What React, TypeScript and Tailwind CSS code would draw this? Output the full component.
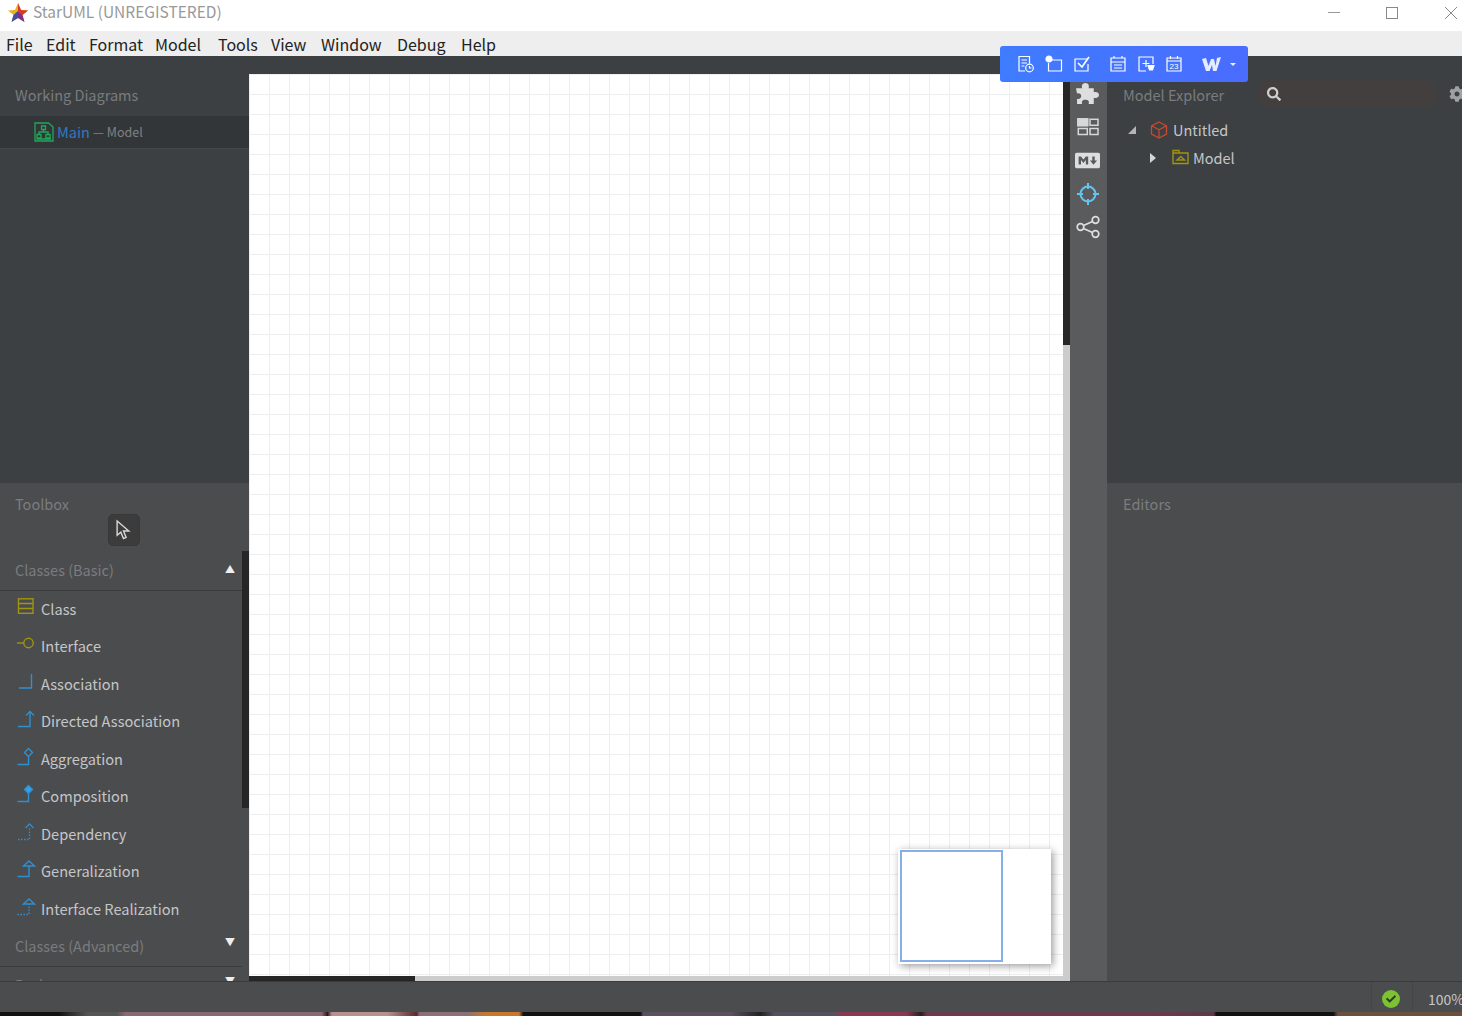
import React from "react";
import { FaCog, FaSearch, FaCheck, FaMarkdown } from "react-icons/fa";

const FONT = "font-['Noto_Sans_CJK_SC','Noto_Sans',sans-serif]";
const BLUE = "#2f8fd0";
const OLIVE = "#a09412";

const menus = [
  { label: "File", width: "w-[40px]" },
  { label: "Edit", width: "w-[43px]" },
  { label: "Format", width: "w-[66px]" },
  { label: "Model", width: "w-[63px]" },
  { label: "Tools", width: "w-[53px]" },
  { label: "View", width: "w-[50px]" },
  { label: "Window", width: "w-[76px]" },
  { label: "Debug", width: "w-[64px]" },
  { label: "Help", width: "w-[40px]" },
];

const tools: { label: string; icon: React.ReactNode }[] = [
  {
    label: "Class",
    icon: (
      <g fill="none" stroke={OLIVE} strokeWidth="1.4">
        <rect x="1.500" y="0.800" width="14.500" height="14.500" />
        <path d="M1.500 5.500H16M1.500 10.500H16" />
      </g>
    ),
  },
  {
    label: "Interface",
    icon: (
      <g fill="none" stroke={OLIVE} strokeWidth="1.4">
        <path d="M0 8H7" />
        <circle cx="11.500" cy="8" r="4.700" />
      </g>
    ),
  },
  {
    label: "Association",
    icon: <path d="M2 15H14.500V1" fill="none" stroke={BLUE} strokeWidth="1.4" />,
  },
  {
    label: "Directed Association",
    icon: (
      <g fill="none" stroke={BLUE} strokeWidth="1.4">
        <path d="M1 16.500H13V1.500" />
        <path d="M9 5.500L13 1.500L17 5.500" />
      </g>
    ),
  },
  {
    label: "Aggregation",
    icon: (
      <g fill="none" stroke={BLUE} strokeWidth="1.4">
        <path d="M0.500 16.500H11.500V8.500" />
        <path d="M11.500 0.500L15.500 4.500L11.500 8.500L7.500 4.500Z" />
      </g>
    ),
  },
  {
    label: "Composition",
    icon: (
      <g fill="none" stroke={BLUE} strokeWidth="1.4">
        <path d="M0.500 16.500H11.500V8.500" />
        <path d="M11.500 0.500L15.500 4.500L11.500 8.500L7.500 4.500Z" fill="#2ea3ea" />
      </g>
    ),
  },
  {
    label: "Dependency",
    icon: (
      <g fill="none" stroke={BLUE} strokeWidth="1.300">
        <path d="M1 16.500H12.500V5" strokeDasharray="1.500 1.500" />
        <path d="M8.500 5L12.500 1L16.500 5" />
      </g>
    ),
  },
  {
    label: "Generalization",
    icon: (
      <g fill="none" stroke={BLUE} strokeWidth="1.4">
        <path d="M0.500 16.500H12V6" />
        <path d="M6.500 6L12 1L17.500 6Z" />
      </g>
    ),
  },
  {
    label: "Interface Realization",
    icon: (
      <g fill="none" stroke={BLUE} strokeWidth="1.4">
        <path d="M0.500 16.500H12V6" strokeDasharray="1.500 1.500" />
        <path d="M6.500 6L12 1L17.500 6Z" />
      </g>
    ),
  },
];

const SectionHeader = ({ label, up }: { label: string; up?: boolean }) => (
  <div className="flex items-center justify-between h-[39px] pl-[15px] pr-[7px] pb-[2px] border-b border-[#3a3b3d] text-[14.500px] text-[#7a7c7e]">
    <span>{label}</span>
    <span className={up ? "text-[10px] text-[#eee] -mt-1" : "text-[10px] text-[#eee] -mt-2"}>{up ? "▲" : "▼"}</span>
  </div>
);

const ToolbarIcon = ({ children }: { children: React.ReactNode }) => (
  <svg width="18" height="18" viewBox="0 0 18 18" fill="none" stroke="#fff" strokeWidth="1.2">
    {children}
  </svg>
);

const RailItem = ({ children }: { children: React.ReactNode }) => (
  <div className="flex items-center justify-center h-[33.500px]">{children}</div>
);

export default function App() {
  return (
    <div className={`${FONT} relative flex flex-col w-[1462px] h-[1016px] overflow-hidden bg-[#3c4042]`}>
      {/* title bar */}
      <div className="flex items-center h-[31px] pb-[6px] bg-white shrink-0">
        <svg width="22" height="22" viewBox="0 0 22 22" className="ml-[7px] mr-[4px]">
          <path d="M11 1L14 8L21 8.500L15.500 13L17.500 20L11 16L4.500 20L6.500 13L1 8.500L8 8Z" fill="#e8b21e" />
          <path d="M11 1L14 8L21 8.500L15.500 13L11 9Z" fill="#d8392b" />
          <path d="M11 9L15.500 13L17.500 20L11 16Z" fill="#7d2f8e" />
          <path d="M11 9L11 16L4.500 20L6.500 13Z" fill="#3d4fa8" />
        </svg>
        <span className="text-[15.500px] text-[#999] -mt-[1px]">StarUML (UNREGISTERED)</span>
        <div className="ml-auto flex items-center">
          <div className="w-[12px] h-px bg-[#999] mr-[46px]" />
          <div className="w-[12px] h-[12px] border border-[#888] mr-[47px]" />
          <svg width="12" height="12" viewBox="0 0 12 12" className="mr-[5px]">
            <path d="M0 0L12 12M12 0L0 12" stroke="#888" strokeWidth="1" />
          </svg>
        </div>
      </div>

      {/* menu bar */}
      <div className="flex items-center h-[25px] pl-[6px] bg-[#eeeeee] text-[16px] text-[#222] shrink-0">
        {menus.map((m) => (
          <span key={m.label} className={m.width}>
            {m.label}
          </span>
        ))}
      </div>

      <div className="flex h-[925px] shrink-0">
        {/* left side */}
        <div className="flex flex-col w-[249px] shrink-0">
          <div className="h-[427px] bg-[#3c4042]">
            <div className="pt-[29px] pl-[15px] h-[60px] text-[14.500px] leading-[20px] text-[#7a7c7e]">Working Diagrams</div>
            <div className="flex items-center h-[33px] pl-[34px] bg-[#333638] border-b border-[#45484a]">
              <svg width="20" height="20" viewBox="0 0 20 20" fill="none" stroke="#1fa85a" strokeWidth="1.300" className="mr-[3px]">
                <path d="M1 1H14.500L19 5V19H1Z" />
                <path d="M7.500 4H11.500V7.500H7.500ZM3 12.500H7V16H3ZM12 12.500H16V16H12ZM9.500 7.500V10M5 12.500V10H14V12.500M2.500 17H17" />
              </svg>
              <span className="text-[14.500px] text-[#3079c0]">Main</span>
              <span className="ml-[3px] text-[12.500px] text-[#808284]">— Model</span>
            </div>
          </div>

          <div className="relative flex flex-col flex-1 min-h-0 bg-[#4b4c4e] overflow-hidden">
            <div className="pt-[11px] pl-[15px] text-[14.500px] leading-[20px] text-[#7a7c7e]">Toolbox</div>
            <div className="flex justify-center pr-[2px] h-[32px]">
              <div className="flex items-center justify-center w-[32px] h-[32px] rounded-[5px] bg-[#3c3c3d] border border-[#37383a]">
                <svg width="17" height="22" viewBox="0 0 16 20" fill="none" stroke="#d8d8d8" strokeWidth="1.300">
                  <path d="M2 1.500V15L5.500 12L8 18L10.500 17L8 11H13Z" />
                </svg>
              </div>
            </div>
            <div className="w-[242px] mt-[6px]">
              <SectionHeader label="Classes (Basic)" up />
              <div className="-mt-[1px]">
                {tools.map((t) => (
                  <div key={t.label} className="flex items-center h-[37.500px] pl-[16px] text-[14.600px] text-[#c5c6c7]">
                    <svg width="20" height="18" viewBox="0 0 18 18" className="mr-[5px] mt-[-4px] shrink-0 overflow-visible">
                      {t.icon}
                    </svg>
                    <span>{t.label}</span>
                  </div>
                ))}
              </div>
              <SectionHeader label="Classes (Advanced)" />
              <SectionHeader label="Packages" />
            </div>
            <div className="absolute left-[242px] top-[68px] w-[7px] h-[257px] bg-[#262626]" />
          </div>
        </div>

        {/* centre */}
        <div className="flex flex-col w-[821px] shrink-0">
          <div className="h-[18px] bg-[#3c4042]" />
          <div className="flex flex-1 min-h-0">
            <div className="flex flex-col flex-1">
              <div className="relative flex-1 bg-white bg-[linear-gradient(#eeeeee_1px,transparent_1px),linear-gradient(90deg,#eeeeee_1px,transparent_1px)] bg-[size:20px_20px] bg-[position:0px_0px]">
                <div className="absolute right-[12px] bottom-[12px] w-[153px] h-[115px] bg-white shadow-[2px_2px_8px_rgba(0,0,0,0.4)] pl-[2px] pt-[1px]">
                  <div className="w-[103px] h-[112px] border-2 border-[#86aee8]" />
                </div>
              </div>
              <div className="h-[5px] bg-[#cccccc]">
                <div className="w-[166px] h-[5px] bg-[#262626]" />
              </div>
            </div>
            <div className="w-[7px] bg-[#cccccc]">
              <div className="w-[7px] h-[271px] bg-[#262626]" />
            </div>
          </div>
        </div>

        {/* icon rail */}
        <div className="flex flex-col w-[37px] pt-[20.500px] pr-[2px] bg-[#5a5b5d] text-[#dedede] shrink-0">
          <RailItem>
            <svg width="23" height="21" viewBox="0 0 22 20" fill="#dedede">
              <path d="M0 5H6C5 3 6 0 9 0C12 0 13 3 12 5H17V9C19 8 22 9 22 11.500C22 14 19 15 17 14V20H12C13 18 12 16 9 16C6 16 5 18 6 20H1V15C3 16 5 14.500 5 12.500C5 10.500 3 9 1 10Z" />
            </svg>
          </RailItem>
          <RailItem>
            <svg width="22" height="18" viewBox="0 0 22 18" fill="none" stroke="#d8d8d8" strokeWidth="1.500">
              <rect x="0.800" y="0.800" width="10" height="7" fill="#d8d8d8" />
              <rect x="13" y="1.300" width="8" height="6" />
              <rect x="1.300" y="10.500" width="9" height="6" />
              <rect x="13" y="10.500" width="8" height="6" />
            </svg>
          </RailItem>
          <RailItem>
            <FaMarkdown size={25} />
          </RailItem>
          <RailItem>
            <svg width="24" height="24" viewBox="0 0 24 24" fill="none" stroke="#66c4ec" strokeWidth="2">
              <circle cx="12" cy="12" r="7.500" />
              <path d="M12 1V7M12 17V23M1 12H7M17 12H23" />
            </svg>
          </RailItem>
          <RailItem>
            <svg width="24" height="24" viewBox="0 0 24 24" fill="none" stroke="#dedede" strokeWidth="1.700">
              <circle cx="4.500" cy="12" r="3.300" />
              <circle cx="19.500" cy="5" r="3.300" />
              <circle cx="19.500" cy="19" r="3.300" />
              <path d="M7.500 10.500L16.500 6.500M7.500 13.500L16.500 17.500" />
            </svg>
          </RailItem>
        </div>

        {/* right side */}
        <div className="flex flex-col flex-1 min-w-0">
          <div className="h-[427px] bg-[#3c4042]">
            <div className="flex items-center pt-[24px] pl-[16px] h-[52px]">
              <span className="text-[14.500px] leading-[20px] mt-[2px] w-[135px] shrink-0 text-[#7a7c7e]">Model Explorer</span>
              <div className="flex items-center w-[179px] h-[28px] pl-[9px] rounded-[10px] bg-[#433f3f] shrink-0">
                <FaSearch size={14} className="text-[#d0d0d0]" />
              </div>
              <FaCog size={16} className="ml-[12px] text-[#a0a0a0] shrink-0" />
            </div>
            <div className="flex items-center h-[28px] mt-[8px] pl-[21px] text-[14.500px] text-[#c5c6c7]">
              <svg width="8" height="8" viewBox="0 0 8 8" className="mr-[14px]">
                <path d="M0 8H8V0Z" fill="#b5b5b5" />
              </svg>
              <svg width="18" height="18" viewBox="0 0 18 18" fill="none" stroke="#c8492f" strokeWidth="1.300" className="mr-[5px]">
                <path d="M9 1L16.500 4.800V13L9 17L1.500 13V4.800ZM1.500 4.800L9 8.800L16.500 4.800M9 8.800V17" />
              </svg>
              <span>Untitled</span>
            </div>
            <div className="flex items-center h-[28px] pl-[43px] text-[14.500px] text-[#c5c6c7]">
              <svg width="6" height="10" viewBox="0 0 6 10" className="mr-[16px]">
                <path d="M0 0L6 5L0 10Z" fill="#d5d5d5" />
              </svg>
              <svg width="17" height="16" viewBox="0 0 17 16" fill="none" stroke={OLIVE} strokeWidth="1.400" className="mr-[4px] -mt-[3px]">
                <path d="M1 14.500V1.500H7V4H16V14.500ZM1 4H7M5 11H12.500L8.800 7.500Z" />
              </svg>
              <span>Model</span>
            </div>
          </div>
          <div className="flex-1 bg-[#4b4c4e] pt-[11px] pl-[16px] text-[14.500px] leading-[20px] text-[#7a7c7e]">Editors</div>
        </div>
      </div>

      {/* status bar */}
      <div className="flex justify-end h-[31px] bg-[#4b4c4e] border-t border-[#3a3b3d] shrink-0">
        <div className="flex items-center justify-center w-[41px] pt-[3px] pr-[2px] border-l border-[#444547]">
          <div className="flex items-center justify-center w-[18px] h-[18px] rounded-full bg-[#7cc232]">
            <FaCheck size={10} className="text-[#333]" />
          </div>
        </div>
        <div className="w-[50px] pl-[15px] border-l border-[#444547] text-[14px] leading-[35px] text-[#c5c6c7] whitespace-nowrap overflow-hidden">100%</div>
      </div>

      {/* wallpaper peeking out below the window */}
      <div className="flex-1 bg-[linear-gradient(90deg,#111_0%,#111_4%,#555_6%,#555_8%,#8a6a70_8.600%,#8a6a70_22%,#2a1a1e_22.400%,#b89090_22.700%,#b89090_26.500%,#5a2a30_28.500%,#8a7078_28.700%,#8a7078_32%,#c8782a_33.200%,#c8782a_35.500%,#111_35.800%,#111_43.800%,#5a5060_44%,#5a5060_50%,#222_52%,#555060_53%,#555060_57%,#8a3a50_57.500%,#8a3a50_62%,#222_63%,#6a3a50_63.400%,#6a3a50_78.700%,#5a3a48_83%,#111_83.200%,#111_91.200%,#6a5040_91.500%,#6a5040_100%)]" />

      {/* floating extension toolbar */}
      <div className="absolute left-[1000px] top-[46px] flex items-center w-[248px] h-[36px] pl-[17px] rounded-[3px] bg-[linear-gradient(90deg,#3f7cff,#4a6cff)]">
        <div className="flex gap-[10px]">
          <ToolbarIcon>
            <path d="M12.500 8.500V1.500H2V16H8M4.500 5H10M4.500 8H10M4.500 11H7.500" />
            <circle cx="12.500" cy="13" r="3.800" />
            <path d="M12.500 11V13H14.500" />
          </ToolbarIcon>
          <ToolbarIcon>
            <path d="M6.500 5H16.500V16H3.500V8" />
            <circle cx="4" cy="4" r="3" fill="#fff" />
          </ToolbarIcon>
          <ToolbarIcon>
            <path d="M14 4H2V16H15V9" />
            <path d="M5 8L9 12L16 2" strokeWidth="1.700" />
          </ToolbarIcon>
        </div>
        <div className="flex gap-[10px] ml-[18px]">
          <ToolbarIcon>
            <path d="M2 3H16V16H2ZM5 1V3M13 1V3M2 7H16M5 10H13M5 13H13" />
          </ToolbarIcon>
          <ToolbarIcon>
            <path d="M16 9V2H2V16H9M9 5V12M5.500 8.500H12.500" />
            <path d="M11 10.500H17L15.500 15H12.500Z" fill="#fff" />
          </ToolbarIcon>
          <ToolbarIcon>
            <path d="M2 3H16V16H2ZM5.500 1V4M12.500 1V4M2 6H16" />
            <text x="9" y="14" fontSize="8" textAnchor="middle" fill="#fff" stroke="none" fontFamily="'Liberation Sans', sans-serif">23</text>
          </ToolbarIcon>
        </div>
        <svg width="20" height="16" viewBox="0 0 20 16" className="ml-[18px]" fill="#e4ecff">
          <path d="M1 3L5 2L7.500 10L10 3L13 3L14.500 10L16 2L20 1L15.500 15L12 15L11 9L8.500 15L5 15Z" />
        </svg>
        <div className="ml-[9px] w-0 h-0 border-x-[3.500px] border-x-transparent border-t-[3.500px] border-t-[#e9efff]" />
      </div>
    </div>
  );
}
